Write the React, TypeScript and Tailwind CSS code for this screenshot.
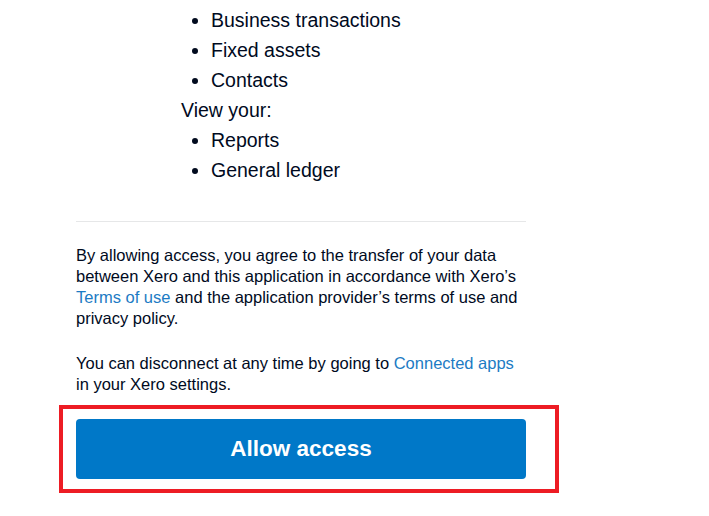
export default function App() {
  return (
    <div className="relative min-h-screen bg-white font-['Liberation_Sans',Arial,sans-serif] text-[#000a1e]">
      <div className="w-[450px] ml-[76px]">
        <div className="pl-[105px] pt-[5px] text-[19.5px] leading-[30px]">
          <ul className="list-disc pl-[30px]">
            <li>Business transactions</li>
            <li>Fixed assets</li>
            <li>Contacts</li>
          </ul>
          <p>View your:</p>
          <ul className="list-disc pl-[30px]">
            <li>Reports</li>
            <li>General ledger</li>
          </ul>
        </div>
        <div className="mt-[36px] h-px bg-[#e6e7e8]" />
        <div className="pt-[23px] text-[16.5px] leading-[21px]">
          <p>
            By allowing access, you agree to the transfer of your data between Xero and this application in
            accordance with Xero’s <a className="text-[#1c7bc4]">Terms of use</a> and the application provider’s
            terms of use and privacy policy.
          </p>
          <p className="mt-[24px]">
            You can disconnect at any time by going to <a className="text-[#1c7bc4]">Connected apps</a> in your
            Xero settings.
          </p>
        </div>
        <button className="mt-[24px] w-full h-[60px] rounded-[4px] bg-[#0078c8] text-white text-[22.5px] font-bold">
          Allow access
        </button>
      </div>
      <div className="absolute left-[59px] top-[405px] w-[500px] h-[88px] border-[4px] border-[#ed1c24]" />
    </div>
  );
}
